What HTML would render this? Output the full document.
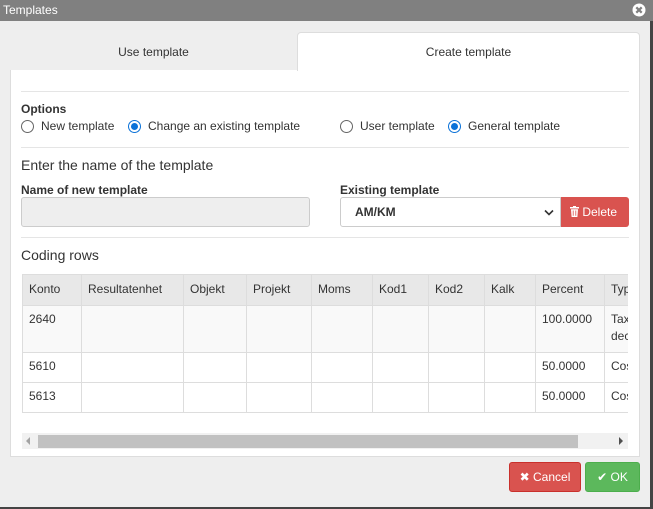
<!DOCTYPE html>
<html><head><meta charset="utf-8"><style>
*{box-sizing:border-box;margin:0;padding:0}
body{width:653px;height:509px;overflow:hidden;background:#eee;font-family:"Liberation Sans",Arial,sans-serif;font-size:12px;color:#333;position:relative}
.a{position:absolute}
.title{left:0;top:0;width:653px;height:21px;background:#808080;color:#fff;font-size:12px;line-height:21px;padding-left:3px}
.rb{left:650px;top:21px;width:3px;height:488px;background:#444}
.bb{left:0;top:507px;width:653px;height:2px;background:#444}
.panel{left:10px;top:70px;width:630px;height:387px;background:#fff;border:1px solid #ddd;border-top:none}
.tab1{left:10px;top:33px;width:287px;height:38px;text-align:center;line-height:38px;border-bottom:1px solid #ddd}
.tab2{left:297px;top:32px;width:343px;height:39px;background:#fff;border:1px solid #ddd;border-bottom:none;border-radius:4px 4px 0 0;text-align:center;line-height:38px}
.hr{height:1px;background:#e5e5e5;left:21px;width:608px}
.lbl{font-weight:bold}
.radio{width:13px;height:13px;border:1px solid #666;border-radius:50%;background:#fff}
.radio.on{border:1px solid #0b72d8}
.radio.on::after{content:"";position:absolute;left:2px;top:2px;width:7px;height:7px;border-radius:50%;background:#0b72d8}
table{border-collapse:collapse;table-layout:fixed}
td{border:1px solid #ddd;padding:5px 6px;vertical-align:top;line-height:17px;white-space:nowrap;overflow:hidden;font-size:12px}
</style></head><body>
<div class="a title">Templates</div>
<svg class="a" style="left:632px;top:3px" width="14" height="14" viewBox="0 0 14 14"><circle cx="7" cy="7" r="6.5" fill="#fff"/><path d="M4.3 4.3L9.7 9.7M9.7 4.3L4.3 9.7" stroke="#808080" stroke-width="2.2"/></svg>
<div class="a rb"></div><div class="a bb"></div>
<div class="a tab1">Use template</div>
<div class="a panel"></div>
<div class="a tab2">Create template</div>
<div class="a hr" style="top:91px"></div>
<div class="a lbl" style="left:21px;top:102px">Options</div>
<div class="a radio" style="left:21px;top:120px"></div><div class="a" style="left:41px;top:119px">New template</div>
<div class="a radio on" style="left:128px;top:120px"></div><div class="a" style="left:148px;top:119px">Change an existing template</div>
<div class="a radio" style="left:340px;top:120px"></div><div class="a" style="left:360px;top:119px">User template</div>
<div class="a radio on" style="left:448px;top:120px"></div><div class="a" style="left:468px;top:119px">General template</div>
<div class="a hr" style="top:147px"></div>
<div class="a" style="left:21px;top:157px;font-size:14px">Enter the name of the template</div>
<div class="a lbl" style="left:21px;top:183px">Name of new template</div>
<div class="a" style="left:21px;top:197px;width:289px;height:30px;background:#eee;border:1px solid #ccc;border-radius:3px"></div>
<div class="a lbl" style="left:340px;top:183px">Existing template</div>
<div class="a" style="left:340px;top:197px;width:221px;height:30px;background:#fff;border:1px solid #ccc;border-radius:3px 0 0 3px;font-weight:bold;line-height:28px;padding-left:14px">AM/KM<svg style="position:absolute;right:6px;top:11px" width="10" height="7" viewBox="0 0 10 7"><path d="M1 1.5L5 5.5L9 1.5" stroke="#333" stroke-width="1.6" fill="none"/></svg></div>
<div class="a" style="left:561px;top:197px;width:68px;height:30px;background:#d9534f;color:#fff;border-radius:0 3px 3px 0;line-height:30px;padding-left:9px"><svg style="vertical-align:-1px" width="9" height="11" viewBox="0 0 9 11"><rect x="0" y="1" width="9" height="1.5" fill="#fff"/><rect x="3" y="0" width="3" height="1.5" fill="#fff"/><path d="M1 3.3H8L7.4 11H1.6Z" fill="#fff"/><path d="M3.2 4.5V9.8M5.8 4.5V9.8" stroke="#d9534f" stroke-width="0.8"/></svg> Delete</div>
<div class="a hr" style="top:237px"></div>
<div class="a" style="left:21px;top:247px;font-size:14px">Coding rows</div>
<div class="a" style="left:22px;top:274px;width:606px;height:139px;overflow:hidden">
<table style="width:660px">
<colgroup><col style="width:59px"><col style="width:102px"><col style="width:63px"><col style="width:65px"><col style="width:61px"><col style="width:56px"><col style="width:56px"><col style="width:51px"><col style="width:69px"><col style="width:78px"></colgroup>
<tr style="background:#e8e8e8;height:31px"><td style="line-height:19px">Konto</td><td style="line-height:19px">Resultatenhet</td><td style="line-height:19px">Objekt</td><td style="line-height:19px">Projekt</td><td style="line-height:19px">Moms</td><td style="line-height:19px">Kod1</td><td style="line-height:19px">Kod2</td><td style="line-height:19px">Kalk</td><td style="line-height:19px">Percent</td><td style="line-height:19px">Type</td></tr>
<tr style="background:#f9f9f9;height:47px"><td>2640</td><td></td><td></td><td></td><td></td><td></td><td></td><td></td><td>100.0000</td><td>Tax<br>dec</td></tr>
<tr style="height:30px"><td>5610</td><td></td><td></td><td></td><td></td><td></td><td></td><td></td><td>50.0000</td><td>Cost</td></tr>
<tr style="height:30px"><td>5613</td><td></td><td></td><td></td><td></td><td></td><td></td><td></td><td>50.0000</td><td>Cost</td></tr>
</table></div>
<div class="a" style="left:22px;top:433px;width:606px;height:16px;background:#f1f1f1"></div>
<div class="a" style="left:38px;top:435px;width:540px;height:13px;background:#c1c1c1"></div>
<div class="a" style="left:26px;top:437px;width:0;height:0;border-top:4px solid transparent;border-bottom:4px solid transparent;border-right:4px solid #a3a3a3"></div>
<div class="a" style="left:619px;top:437px;width:0;height:0;border-top:4px solid transparent;border-bottom:4px solid transparent;border-left:4px solid #505050"></div>
<div class="a" style="left:509px;top:462px;width:72px;height:30px;background:#d9534f;border:1px solid #c9302c;border-radius:3px;color:#fff;text-align:center;line-height:28px">✖ Cancel</div>
<div class="a" style="left:585px;top:462px;width:55px;height:30px;background:#5cb85c;border:1px solid #4cae4c;border-radius:3px;color:#fff;text-align:center;line-height:28px">✔ OK</div>
</body></html>
